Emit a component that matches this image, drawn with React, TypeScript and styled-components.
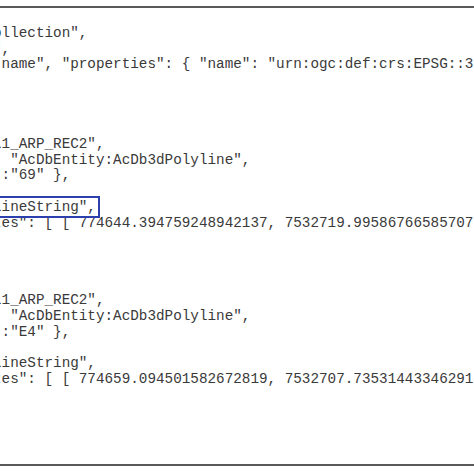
import React from "react";
import styled, { createGlobalStyle } from "styled-components";

const Global = createGlobalStyle`
  html, body { margin: 0; padding: 0; background: #ffffff; overflow: hidden; }
`;

const Page = styled.div`
  width: 474px;
  height: 474px;
  background: #ffffff;
  overflow: hidden;
  padding-top: 6px;
  box-sizing: border-box;
  display: flex;
  flex-direction: column;
`;

const Rule = styled.div`
  flex: none;
  height: 2px;
  background: #5a5a5a;
`;

const Body = styled.div`
  flex: none;
  height: 456px;
  overflow: hidden;
  display: flex;
  flex-direction: column;
`;

const Block = styled.pre<{ $top: number }>`
  margin: ${(p) => p.$top}px 0 0 -7px;
  font-family: "Liberation Mono", "Courier New", monospace;
  font-size: 14.3px;
  line-height: 15.7px;
  color: #3a3a3a;
  white-space: pre;
`;

const Line = styled.div`
  height: 15.7px;
`;

const Boxed = styled.span`
  outline: 2px solid #2b3fae;
  outline-offset: 1px;
  padding: 0 1px 0 8px;
  margin-left: -8px;
`;

export default function App() {
  return (
    <>
      <Global />
      <Page>
        <Rule />
        <Body>
          <Block $top={18}>
            <Line>{'ollection",'}</Line>
            <Line>{'",'}</Line>
            <Line>{'"name", "properties": { "name": "urn:ogc:def:crs:EPSG::31983" } },'}</Line>
          </Block>
          <Block $top={64}>
            <Line>{'L1_ARP_REC2",'}</Line>
            <Line>{': "AcDbEntity:AcDb3dPolyline",'}</Line>
            <Line>{'":"69" },'}</Line>
            <Line>{" "}</Line>
            <Line>
              <Boxed>{'LineString",'}</Boxed>
            </Line>
            <Line>{'tes": [ [ 774644.394759248942137, 7532719.995867665857077 ], [ 774650.1'}</Line>
          </Block>
          <Block $top={62}>
            <Line>{'L1_ARP_REC2",'}</Line>
            <Line>{': "AcDbEntity:AcDb3dPolyline",'}</Line>
            <Line>{'":"E4" },'}</Line>
            <Line>{" "}</Line>
            <Line>{'LineString",'}</Line>
            <Line>{'tes": [ [ 774659.094501582672819, 7532707.735314433462918 ], [ 774660.2'}</Line>
          </Block>
        </Body>
        <Rule />
      </Page>
    </>
  );
}
